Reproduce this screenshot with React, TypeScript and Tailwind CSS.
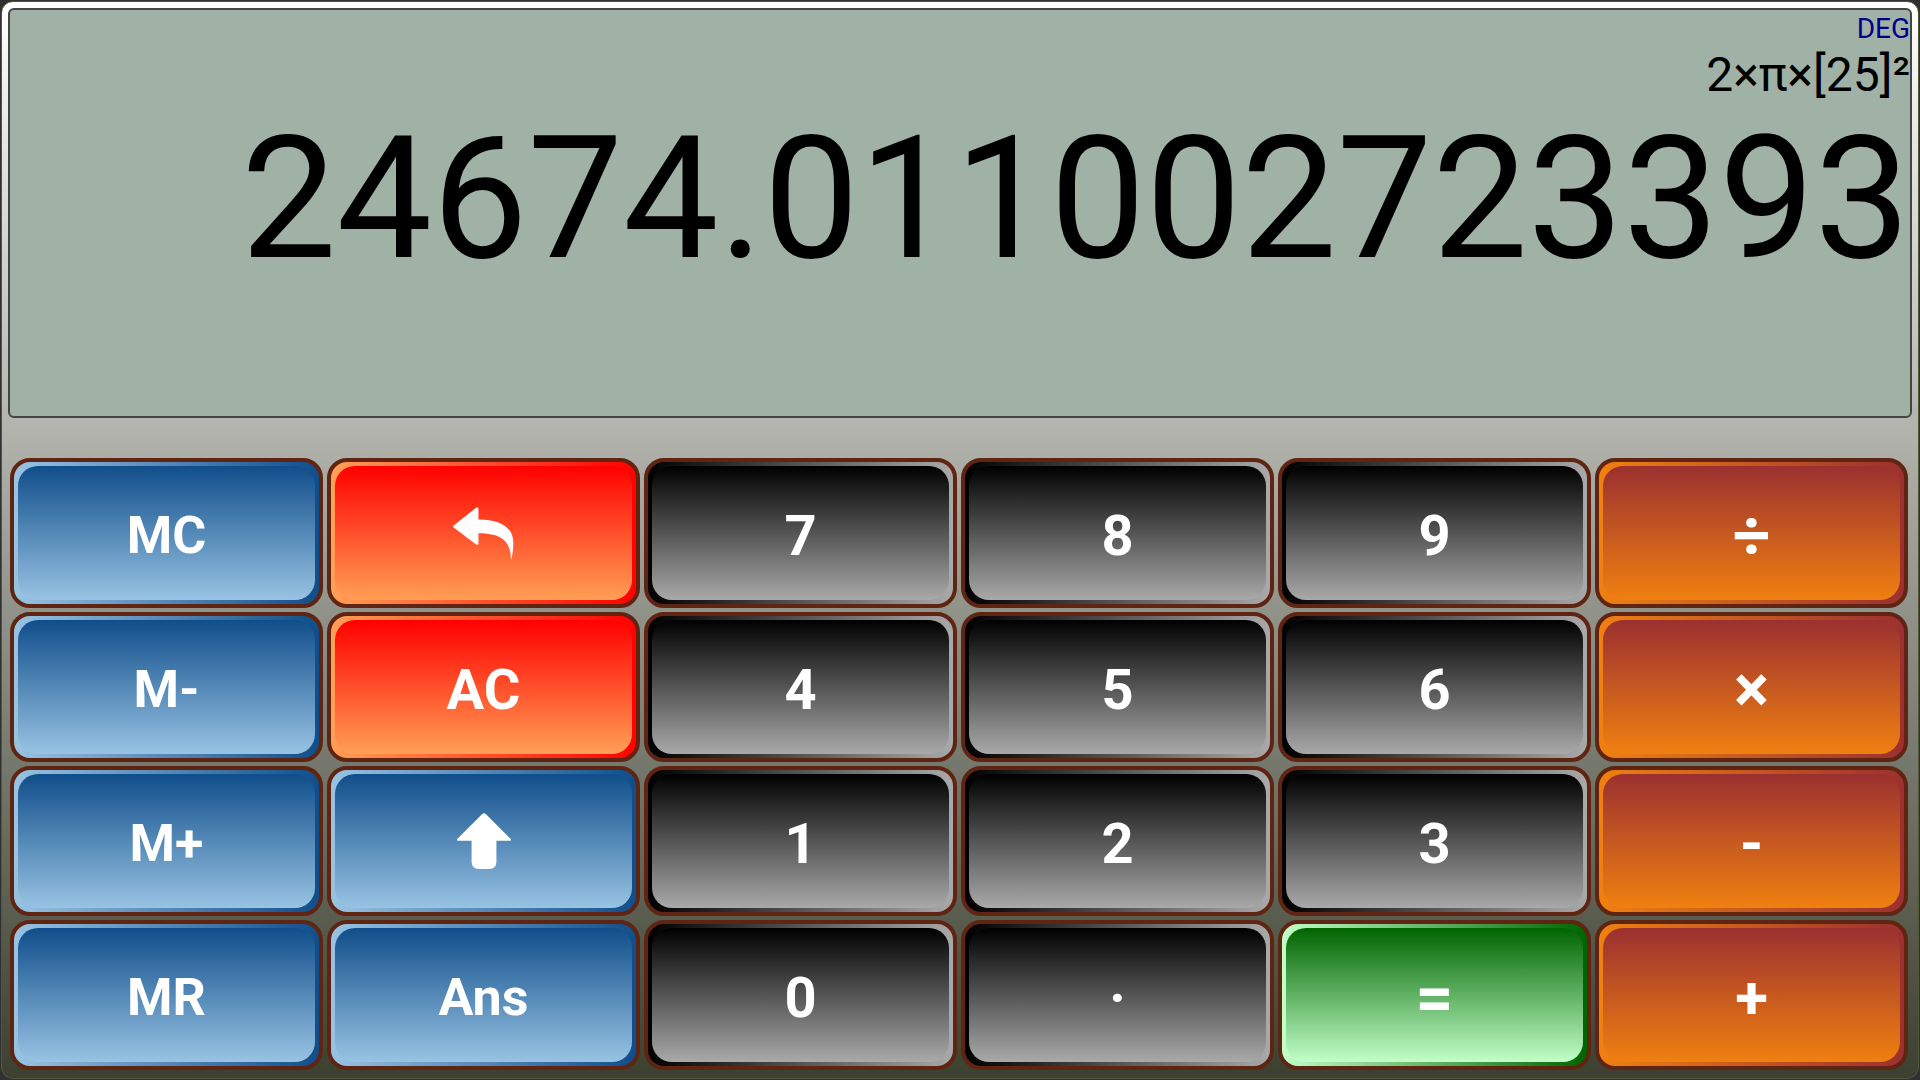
import { useState, type ReactNode } from "react";
import clsx from "clsx";

type Tone = "blue" | "red" | "black" | "orange" | "green";

interface Key {
  id: string;
  tone: Tone;
  size?: "word" | "digit" | "sign" | "wideSign";
  icon?: ReactNode;
}

const edges: Record<Tone, string> = {
  blue: "from-[#98c3e3] to-[#104e8b]",
  red: "from-[#ff9f55] to-[#ff0000]",
  black: "from-[#000000] to-[#a9a9a9]",
  orange: "from-[#f08010] to-[#9b3030]",
  green: "from-[#c1ffc8] to-[#006400]",
};

const faces: Record<Tone, string> = {
  blue: "from-[#104e8b] to-[#98c3e3]",
  red: "from-[#ff0000] to-[#ff9f55]",
  black: "from-[#000000] to-[#a9a9a9]",
  orange: "from-[#9b3030] to-[#f08010]",
  green: "from-[#006400] to-[#c1ffc8]",
};

const sizes = {
  word: "text-[52px]",
  digit: "text-[56px]",
  sign: "text-[60px]",
  wideSign: "text-[66px]",
};

const UndoIcon = () => (
  <svg className="h-[53px] w-[61px]" viewBox="0 0 182 158" fill="currentColor">
    <path d="M1 56 L69 2 Q76 -2 76 6 V37 C145 37 180 64 180 106 Q180 136 173 158 C173 108 152 78 76 78 V107 Q76 116 69 112 L1 60 Q-1 58 1 56 Z" />
  </svg>
);

const ShiftIcon = () => (
  <svg className="h-[56px] w-[54px]" viewBox="0 0 163 169" fill="currentColor">
    <path d="M76 3 Q81.500 -2 87 3 L161 77 Q166 84 158 84 H119 V147 Q119 169 97 169 H66 Q44 169 44 147 V84 H5 Q-3 84 2 77 Z" />
  </svg>
);

const keys: Key[] = [
  { id: "MC", tone: "blue", size: "word" },
  { id: "Undo", tone: "red", icon: <UndoIcon /> },
  { id: "7", tone: "black" },
  { id: "8", tone: "black" },
  { id: "9", tone: "black" },
  { id: "÷", tone: "orange", size: "wideSign" },
  { id: "M-", tone: "blue", size: "word" },
  { id: "AC", tone: "red" },
  { id: "4", tone: "black" },
  { id: "5", tone: "black" },
  { id: "6", tone: "black" },
  { id: "×", tone: "orange", size: "wideSign" },
  { id: "M+", tone: "blue", size: "word" },
  { id: "Shift", tone: "blue", icon: <ShiftIcon /> },
  { id: "1", tone: "black" },
  { id: "2", tone: "black" },
  { id: "3", tone: "black" },
  { id: "-", tone: "orange", size: "sign" },
  { id: "MR", tone: "blue", size: "word" },
  { id: "Ans", tone: "blue", size: "word" },
  { id: "0", tone: "black" },
  { id: "·", tone: "black" },
  { id: "=", tone: "green", size: "wideSign" },
  { id: "+", tone: "orange", size: "sign" },
];

const CalcKey = ({ item, onPress }: { item: Key; onPress: () => void }) => (
  <button
    type="button"
    aria-label={item.icon ? item.id : undefined}
    onClick={onPress}
    className={clsx(
      "flex rounded-[20px] border-4 border-[#602512] bg-linear-to-r/srgb p-1 cursor-pointer",
      edges[item.tone]
    )}
  >
    <span
      className={clsx(
        "flex flex-1 self-stretch items-center justify-center rounded-[20px] bg-linear-to-b/srgb font-bold leading-none text-white",
        faces[item.tone],
        !item.icon && "pt-1.5",
        !item.icon && sizes[item.size ?? "digit"]
      )}
    >
      {item.icon ?? item.id}
    </span>
  </button>
);

export default function App() {
  const [formula, setFormula] = useState("2×π×[25]²");
  const [result, setResult] = useState("24674.011002723393");

  const handlePress = (id: string) => {
    if (id === "AC") {
      setFormula("");
      setResult("0");
    } else if (id === "Undo") {
      setFormula((prev) => prev.slice(0, -1));
    } else if (/^[0-9÷×+-]$/.test(id)) {
      setFormula((prev) => prev + id);
    }
  };

  return (
    <div className="flex min-h-screen bg-[#303030] p-px font-['Roboto',sans-serif]">
      <main className="flex flex-1 flex-col rounded-xl border border-[#55573a] bg-linear-to-b/srgb from-white to-[#3c402f] p-1.5">
        {/* Display */}
        <section className="flex flex-1 flex-col items-end overflow-hidden rounded-md border-2 border-[#444444] bg-[#a0b1a6] pt-px text-black">
          <p className="text-[28px] leading-9 text-[#00008b]">DEG</p>
          <p className="h-14 text-5xl leading-14">{formula}</p>
          <output className="text-[170px] leading-48">{result}</output>
        </section>

        {/* Keypad */}
        <div className="mt-10 grid auto-rows-[150px] grid-cols-6 gap-1 pr-1 pb-0.5 pl-0.5">
          {keys.map((item) => (
            <CalcKey
              key={item.id}
              item={item}
              onPress={() => handlePress(item.id)}
            />
          ))}
        </div>
      </main>
    </div>
  );
}
